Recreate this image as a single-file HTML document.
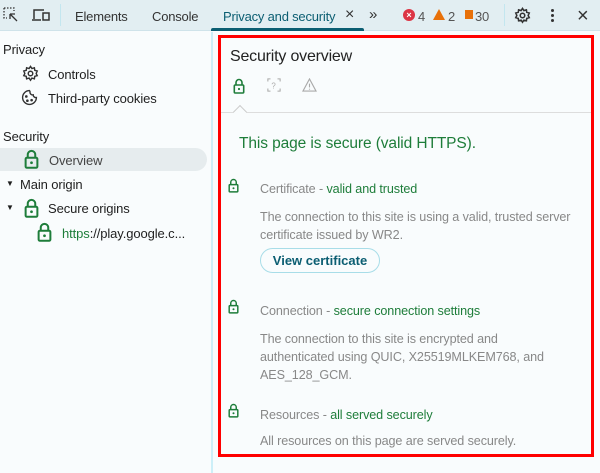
<!DOCTYPE html>
<html><head><meta charset="utf-8"><style>
*{margin:0;padding:0;box-sizing:border-box}
body{width:600px;height:473px;overflow:hidden;background:#f9fcfd;font-family:"Liberation Sans",sans-serif;position:relative;color:#1f1f1f}
.tb{position:absolute;left:0;top:0;width:600px;height:31px;background:#e2eef2;border-bottom:1px solid #cfe3ea}
.a{position:absolute;font-size:13px;color:#333;top:9px;letter-spacing:-0.2px}
.sep{position:absolute;top:4px;width:1px;height:22px;background:#c3e6ef}
.l{position:absolute;font-size:13px;color:#1f1f1f;letter-spacing:-0.1px}
.g{color:#1e7d3a}
.lock{position:absolute}
.box{position:absolute;left:218px;top:35px;width:376px;height:422px;border:3px solid #f00;background:#f9fcfd}
.r{position:absolute;font-size:12.6px;color:#888;letter-spacing:-0.1px}
</style></head><body>
<div class="tb">
<svg style="position:absolute;left:3px;top:7px" width="16" height="16" viewBox="0 0 16 16" fill="none" stroke="#333" stroke-width="1.3"><path d="M1 1h10v3M1 1v10h3" stroke-dasharray="1.5 1.5"/><path d="M7 7l7 7M7 7h5M7 7v5"/></svg>
<svg style="position:absolute;left:31px;top:8px" width="20" height="14" viewBox="0 0 20 14" fill="none" stroke="#333" stroke-width="1.5"><path d="M3 11V2h10M1 12h9"/><rect x="12" y="5" width="6" height="7"/></svg>
<div class="sep" style="left:60px"></div>
<div class="a" style="left:75px">Elements</div>
<div class="a" style="left:152px">Console</div>
<div class="a" style="left:223px;color:#0b5e72">Privacy and security</div>
<div class="a" style="left:345px;top:6px;font-size:16px;color:#333">×</div>
<div style="position:absolute;left:211px;top:28px;width:153px;height:3px;background:#0b5e72;border-radius:2px 2px 0 0"></div>
<div class="a" style="left:369px;top:6px;font-size:15px;color:#333">»</div>
<div style="position:absolute;left:403px;top:9px;width:12px;height:12px;border-radius:50%;background:#dc3545;color:#fff;font-size:9px;line-height:12px;text-align:center;font-weight:bold">×</div>
<div class="a" style="left:418px;color:#555">4</div>
<div style="position:absolute;left:433px;top:9px;width:0;height:0;border-left:6px solid transparent;border-right:6px solid transparent;border-bottom:11px solid #e8710a"></div>
<div class="a" style="left:448px;color:#555">2</div>
<div style="position:absolute;left:465px;top:10px;width:8px;height:9px;background:#e8710a"></div>
<div class="a" style="left:475px;color:#555">30</div>
<div class="sep" style="left:504px"></div>
<svg style="position:absolute;left:514px;top:7px" width="17" height="17" viewBox="0 0 24 24" fill="none" stroke="#333" stroke-width="2.2"><circle cx="12" cy="12" r="3.2"/><path d="M12 2l2 3 3.5-1 .5 3.5 3.5 1-1.5 3.5 1.5 3-3.5 1-.5 3.5-3.5-1-2 3-2-3-3.5 1-.5-3.5-3.5-1 1.5-3-1.5-3.5 3.5-1 .5-3.5 3.5 1z"/></svg>
<div style="position:absolute;left:551px;top:9px;width:3px;height:3px;background:#333;border-radius:50%;box-shadow:0 5px #333,0 10px #333"></div>
<div class="a" style="left:577px;top:5px;font-size:20px;color:#333">×</div>
</div>
<div style="position:absolute;left:211px;top:32px;width:2px;height:441px;background:#cdeff8"></div>

<div class="l" style="left:3px;top:42px">Privacy</div>
<svg style="position:absolute;left:22px;top:65px" width="17" height="17" viewBox="0 0 24 24" fill="none" stroke="#333" stroke-width="2"><circle cx="12" cy="12" r="3.2"/><path d="M12 2l2 3 3.5-1 .5 3.5 3.5 1-1.5 3.5 1.5 3-3.5 1-.5 3.5-3.5-1-2 3-2-3-3.5 1-.5-3.5-3.5-1 1.5-3-1.5-3.5 3.5-1 .5-3.5 3.5 1z"/></svg>
<div class="l" style="left:48px;top:67px">Controls</div>
<svg style="position:absolute;left:21px;top:89px" width="17" height="17" viewBox="0 0 16 16" fill="none" stroke="#333" stroke-width="1.3"><path d="M8 1.5a6.5 6.5 0 1 0 6.5 6.5 2.5 2.5 0 0 1-3-2.5 2.5 2.5 0 0 1-3-3z"/><circle cx="5" cy="7" r=".6" fill="#333"/><circle cx="6" cy="11" r=".6" fill="#333"/><circle cx="10" cy="10.5" r=".6" fill="#333"/></svg>
<div class="l" style="left:48px;top:91px">Third-party cookies</div>
<div class="l" style="left:3px;top:129px">Security</div>
<div style="position:absolute;left:0;top:148px;width:207px;height:23px;background:#e6ecee;border-radius:0 12px 12px 0"></div>
<div class="l" style="left:49px;top:153px;color:#444">Overview</div>
<div class="l" style="left:6px;top:179px;font-size:8px">▼</div>
<div class="l" style="left:20px;top:177px">Main origin</div>
<div class="l" style="left:6px;top:203px;font-size:8px">▼</div>
<div class="l" style="left:48px;top:201px">Secure origins</div>
<div class="l" style="left:62px;top:226px"><span class="g">https</span>://play.google.c...</div>

<div class="box">
<div style="position:absolute;left:9px;top:10px;font-size:16px;color:#222;letter-spacing:-0.2px">Security overview</div>
<svg style="position:absolute;left:46px;top:40px" width="14" height="14" viewBox="0 0 16 16" fill="none" stroke="#aaa" stroke-width="1.2"><path d="M1 4V1h3M12 1h3v3M15 12v3h-3M4 15H1v-3"/><text x="5" y="12" font-size="9" fill="#aaa" stroke="none" font-family="Liberation Sans">?</text></svg>
<svg style="position:absolute;left:81px;top:40px" width="15" height="14" viewBox="0 0 16 15" fill="none" stroke="#aaa" stroke-width="1.2"><path d="M8 1L15 14H1z M8 6v4 M8 11.5v1"/></svg>
<div style="position:absolute;left:0;top:74px;width:370px;height:1px;background:#ddd"></div>
<div style="position:absolute;left:14px;top:69px;width:10px;height:10px;border-left:1px solid #ccc;border-top:1px solid #ccc;transform:rotate(45deg);background:#f9fcfd"></div>
<div style="position:absolute;left:18px;top:97px;font-size:15.5px;letter-spacing:-0.1px" class="g">This page is secure (valid HTTPS).</div>
<div class="r" style="left:39px;top:144px">Certificate - <span class="g">valid and trusted</span></div>
<div class="r" style="left:39px;top:170px;line-height:18px">The connection to this site is using a valid, trusted server<br>certificate issued by WR2.</div>
<div style="position:absolute;left:39px;top:210px;width:120px;height:25px;border:1px solid #a8dde8;border-radius:13px;font-size:13px;font-weight:bold;color:#0b5e72;text-align:center;line-height:23px">View certificate</div>
<div class="r" style="left:39px;top:266px">Connection - <span class="g">secure connection settings</span></div>
<div class="r" style="left:39px;top:292px;line-height:18px">The connection to this site is encrypted and<br>authenticated using QUIC, X25519MLKEM768, and<br>AES_128_GCM.</div>
<div class="r" style="left:39px;top:370px">Resources - <span class="g">all served securely</span></div>
<div class="r" style="left:39px;top:396px">All resources on this page are served securely.</div>
</div>

<svg width="0" height="0" style="position:absolute"><defs><symbol id="lk" viewBox="0 0 12 16"><path d="M3 7V4.5a3 3 0 0 1 6 0V7" fill="none" stroke="#1e7d3a" stroke-width="1.6"/><rect x="1.3" y="7" width="9.4" height="8" rx="1" fill="none" stroke="#1e7d3a" stroke-width="1.6"/><circle cx="6" cy="11" r="1.1" fill="#1e7d3a"/></symbol></defs></svg>
<svg class="lock" style="left:233px;top:78px" width="12" height="16"><use href="#lk"/></svg>
<svg class="lock" style="left:24px;top:149px" width="15" height="20"><use href="#lk"/></svg>
<svg class="lock" style="left:24px;top:198px" width="15" height="20"><use href="#lk"/></svg>
<svg class="lock" style="left:37px;top:222px" width="15" height="20"><use href="#lk"/></svg>
<svg class="lock" style="left:228px;top:178px" width="11" height="15"><use href="#lk"/></svg>
<svg class="lock" style="left:228px;top:299px" width="11" height="15"><use href="#lk"/></svg>
<svg class="lock" style="left:228px;top:403px" width="11" height="15"><use href="#lk"/></svg>
</body></html>
